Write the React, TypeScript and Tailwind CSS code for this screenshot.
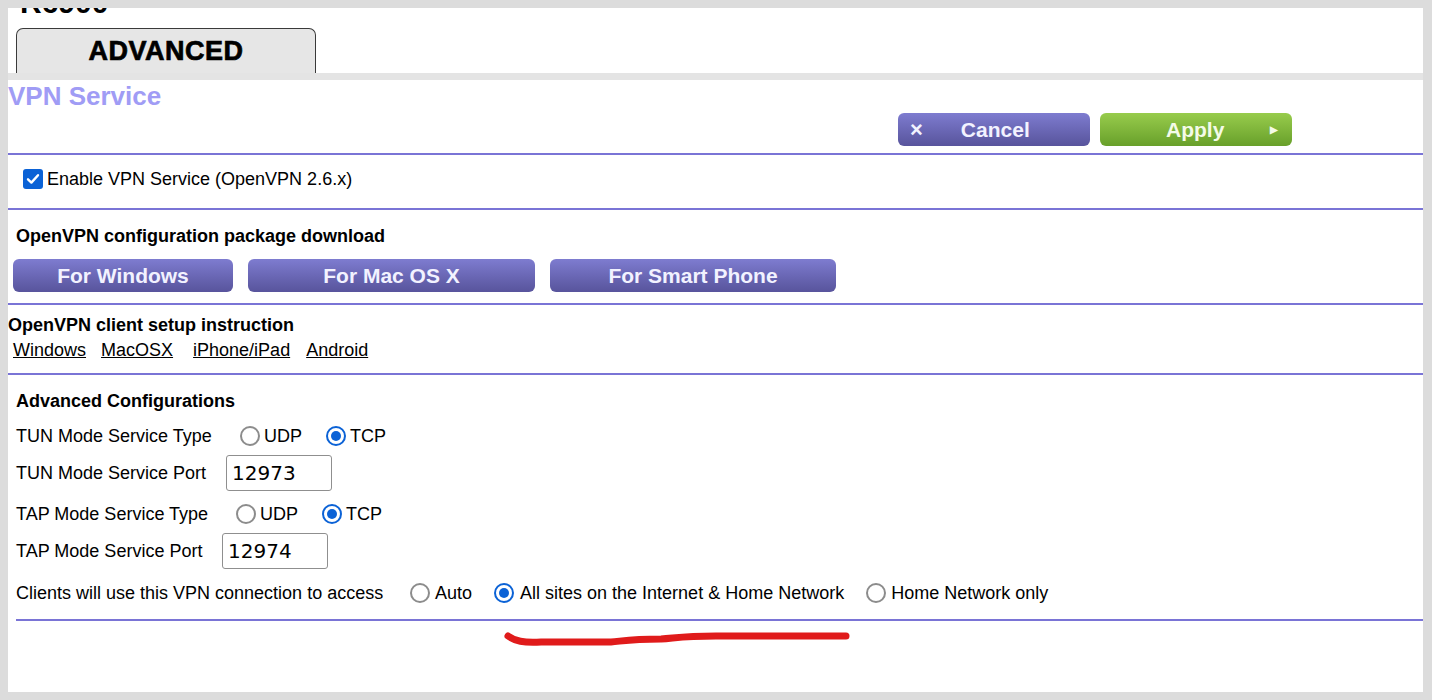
import React from "react";

const font = { fontFamily: '"Liberation Sans", Arial, sans-serif' };

const Radio: React.FC<{ checked?: boolean }> = ({ checked }) =>
  checked ? (
    <span className="inline-flex h-[20px] w-[20px] shrink-0 items-center justify-center rounded-full border-[2px] border-[#0b62d6] bg-white">
      <span className="h-[10px] w-[10px] rounded-full bg-[#0b62d6]" />
    </span>
  ) : (
    <span className="inline-block h-[20px] w-[20px] shrink-0 rounded-full border-[2px] border-[#8c8c8c] bg-white" />
  );

const Divider: React.FC<{ className?: string }> = ({ className = "" }) => (
  <div className={`h-[2px] shrink-0 bg-[#7a74d6] ${className}`} />
);

const PurpleButton: React.FC<{ label: string; width: string }> = ({ label, width }) => (
  <button
    className={`${width} h-[33px] rounded-[6px] bg-gradient-to-b from-[#7e7cd0] to-[#58549c] text-[21px] font-bold text-[#f2f2ff]`}
  >
    {label}
  </button>
);

const PortInput: React.FC<{ value: string }> = ({ value }) => (
  <div
    className="flex h-[36px] w-[106px] items-center rounded-[3px] border border-[#8f8f8f] bg-white pl-[5px] text-[20px] text-black"
    style={{ fontFamily: '"DejaVu Sans", Verdana, sans-serif' }}
  >
    {value}
  </div>
);

export default function App() {
  return (
    <div className="flex h-[700px] w-[1432px] flex-col bg-[#dcdcdc] pb-[8px] pl-[8px] pr-[9px] pt-[8px] text-[18px] leading-[20px] text-black" style={font}>
      {/* header */}
      <div className="h-[65px] shrink-0 overflow-hidden bg-white">
        <div className="-mt-[20px] ml-[12px] text-[30px] font-bold leading-[30px]">R6900</div>
        <div className="ml-[8px] mt-[10px] flex h-[45px] w-[300px] items-center justify-center rounded-t-[7px] border border-b-0 border-[#3a3a3a] bg-[#e6e6e6] text-[27px] font-bold tracking-[0.5px] [-webkit-text-stroke:0.7px_black]">
          ADVANCED
        </div>
      </div>
      <div className="h-[7px] shrink-0 bg-[#e4e4e4]" />

      {/* main panel */}
      <div className="flex flex-1 flex-col bg-white">
        <div className="pt-[2px] text-[26px] font-bold leading-[28px] text-[#a09cf5]">VPN Service</div>

        <div className="mt-[3px] flex gap-[10px] pl-[890px]">
          <button className="flex h-[33px] w-[192px] items-center rounded-[6px] bg-gradient-to-b from-[#7e7cd0] to-[#58549c] text-[21px] font-bold text-[#f2f2ff]">
            <span className="ml-[12px] text-[22px] leading-none">×</span>
            <span className="ml-[38px]">Cancel</span>
          </button>
          <button className="flex h-[33px] w-[192px] items-center rounded-[6px] bg-gradient-to-b from-[#98cc4c] to-[#68a02a] text-[21px] font-bold text-[#f4fbe8]">
            <span className="ml-[66px]">Apply</span>
            <span className="ml-[46px] text-[10px]">▶</span>
          </button>
        </div>

        <Divider className="mt-[7px]" />

        <div className="flex h-[53px] items-start pl-[15px] pt-[14px]">
          <span className="flex h-[20px] w-[20px] items-center justify-center rounded-[3px] bg-[#0b62d6]">
            <svg width="16" height="16" viewBox="0 0 16 16">
              <path d="M3 8.3 L6.4 11.6 L13 4.2" fill="none" stroke="white" strokeWidth="2.4" strokeLinecap="round" strokeLinejoin="round" />
            </svg>
          </span>
          <span className="ml-[4px]">Enable VPN Service (OpenVPN 2.6.x)</span>
        </div>

        <Divider />

        <div className="flex h-[93px] flex-col">
          <div className="mt-[16px] pl-[8px] font-bold">OpenVPN configuration package download</div>
          <div className="mt-[13px] flex gap-[15px] pl-[5px]">
            <PurpleButton label="For Windows" width="w-[220px]" />
            <PurpleButton label="For Mac OS X" width="w-[287px]" />
            <PurpleButton label="For Smart Phone" width="w-[286px]" />
          </div>
        </div>

        <Divider />

        <div className="flex h-[68px] flex-col">
          <div className="mt-[10px] font-bold">OpenVPN client setup instruction</div>
          <div className="mt-[5px] flex pl-[5px]">
            <span className="underline">Windows</span>
            <span className="ml-[15px] underline">MacOSX</span>
            <span className="ml-[20px] underline">iPhone/iPad</span>
            <span className="ml-[16px] underline">Android</span>
          </div>
        </div>

        <Divider />

        <div className="flex flex-col pl-[8px]">
          <div className="mt-[16px] font-bold">Advanced Configurations</div>

          <div className="mt-[15px] flex h-[20px] items-center">
            <span className="w-[224px]">TUN Mode Service Type</span>
            <Radio />
            <span className="ml-[4px]">UDP</span>
            <span className="ml-[24px]" />
            <Radio checked />
            <span className="ml-[4px]">TCP</span>
          </div>

          <div className="mt-[9px] flex h-[36px] items-center">
            <span className="w-[210px]">TUN Mode Service Port</span>
            <PortInput value="12973" />
          </div>

          <div className="mt-[13px] flex h-[20px] items-center">
            <span className="w-[220px]">TAP Mode Service Type</span>
            <Radio />
            <span className="ml-[4px]">UDP</span>
            <span className="ml-[24px]" />
            <Radio checked />
            <span className="ml-[4px]">TCP</span>
          </div>

          <div className="mt-[9px] flex h-[36px] items-center">
            <span className="w-[206px]">TAP Mode Service Port</span>
            <PortInput value="12974" />
          </div>

          <div className="mt-[14px] flex h-[20px] items-center">
            <span className="w-[394px]">Clients will use this VPN connection to access</span>
            <Radio />
            <span className="ml-[5px]">Auto</span>
            <span className="ml-[22px]" />
            <Radio checked />
            <span className="ml-[6px]">All sites on the Internet &amp; Home Network</span>
            <span className="ml-[22px]" />
            <Radio />
            <span className="ml-[5px]">Home Network only</span>
          </div>
        </div>

        <Divider className="ml-[8px] mt-[16px]" />

        <svg className="ml-[493px] mt-[9px]" width="350" height="22" viewBox="0 0 350 22">
          <path
            d="M7 6 C 14 11, 22 13, 40 12 L 110 12 C 122 11, 130 9, 160 9 C 175 8, 182 6, 215 6 L 345 6"
            fill="none"
            stroke="#e01b1b"
            strokeWidth="7"
            strokeLinecap="round"
            strokeLinejoin="round"
          />
        </svg>
      </div>
    </div>
  );
}
